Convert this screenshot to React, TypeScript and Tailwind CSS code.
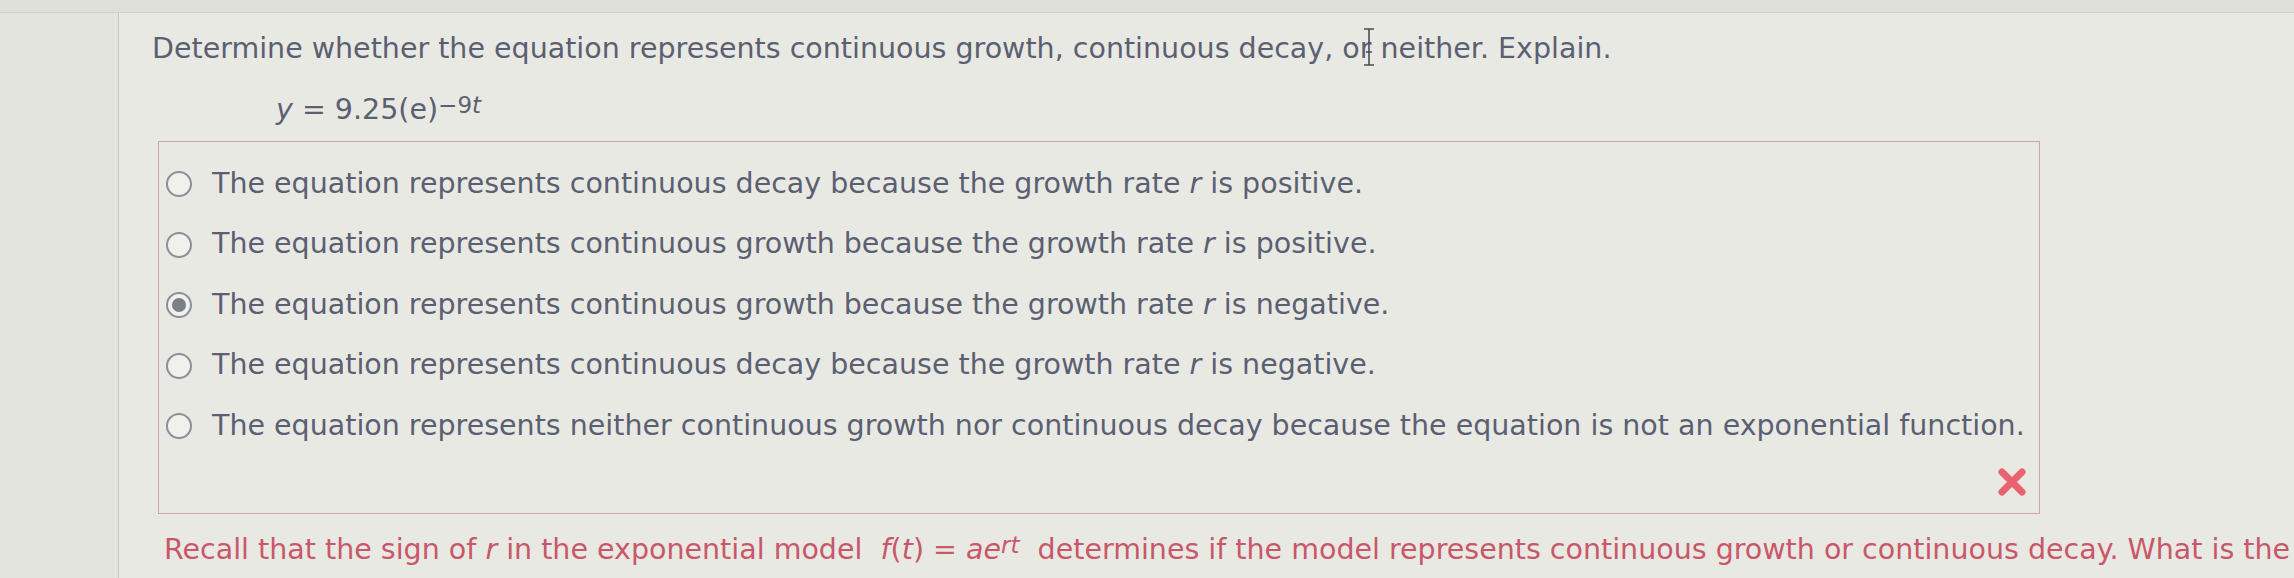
import React from 'react';

// Opciones de la pregunta
const options = [
  { text: 'decay because the growth rate', tail: 'is positive.', selected: false },
  { text: 'growth because the growth rate', tail: 'is positive.', selected: false },
  { text: 'growth because the growth rate', tail: 'is negative.', selected: true },
  { text: 'decay because the growth rate', tail: 'is negative.', selected: false },
];

const Radio = ({ selected }: { selected: boolean }) => (
  <span className="flex h-[26px] w-[26px] shrink-0 items-center justify-center rounded-full border-[2.5px] border-[#8d8f98] bg-[#f0f0ec]">
    {selected && <span className="h-[14px] w-[14px] rounded-full bg-[#7b7f86]" />}
  </span>
);

const IBeam = () => (
  <span className="relative inline-block w-0">
    <svg className="absolute left-[-8px] top-[-30px]" width="12" height="38" viewBox="0 0 12 38">
      <path d="M1 1h10M6 1v36M1 37h10M3 24h6" stroke="#4a4c55" strokeWidth="1.6" fill="none" />
    </svg>
  </span>
);

export default function App() {
  return (
    <div
      className="flex h-[578px] w-[2294px] flex-col overflow-hidden bg-[#e9e9e3] text-[28.5px] text-[#5b5f72]"
      style={{ fontFamily: '"DejaVu Sans", Verdana, sans-serif' }}
    >
      {/* Banda superior */}
      <div className="h-[13px] shrink-0 border-b border-[#cfcfc9] bg-[#dedfd9]" />

      <div className="flex flex-1">
        {/* Margen izquierdo */}
        <div className="w-[119px] shrink-0 border-r border-[#c9c9c3] bg-[#e4e4de]" />

        {/* Contenido */}
        <div className="flex min-w-0 flex-1 flex-col pt-[18px]">
          <p className="ml-[33px] whitespace-nowrap leading-[36px]">
            Determine whether the equation represents continuous growth, continuous decay, or
            <IBeam /> neither. Explain.
          </p>

          <p className="ml-[157px] mt-[25px] whitespace-nowrap leading-[36px]">
            <i>y</i> = 9.25(e)
            <sup className="relative top-[-6px] text-[23px]">
              −9<i>t</i>
            </sup>
          </p>

          <div className="ml-[39px] mt-[13px] w-[1882px] border-[1.5px] border-[#d6a0a7] pl-[7px] pr-[10px] pt-[12px] pb-[16px]">
            {options.map((o, i) => (
              <div key={i} className="flex h-[60.5px] items-center gap-[20px] whitespace-nowrap">
                <Radio selected={o.selected} />
                <span>
                  The equation represents continuous {o.text} <i>r</i> {o.tail}
                </span>
              </div>
            ))}
            <div className="flex h-[60.5px] items-center gap-[20px] whitespace-nowrap">
              <Radio selected={false} />
              <span>
                The equation represents neither continuous growth nor continuous decay because the equation is
                not an exponential function.
              </span>
            </div>
            <div className="flex justify-end pt-[10px] pr-[2px]">
              <svg width="30" height="30" viewBox="0 0 30 30">
                <path d="M5 5L25 25M25 5L5 25" stroke="#e8636f" strokeWidth="7" strokeLinecap="round" />
              </svg>
            </div>
          </div>

          <p className="ml-[45px] mt-[18px] whitespace-nowrap leading-[36px] text-[#c9576a]">
            Recall that the sign of <i>r</i> in the exponential model&nbsp;{' '}
            <i>f</i>(<i>t</i>) = <i>ae</i>
            <sup className="relative top-[-6px] text-[23px]">
              <i>rt</i>
            </sup>
            &nbsp;{' '}determines if the model represents continuous growth or continuous decay. What is the
          </p>
        </div>
      </div>
    </div>
  );
}
